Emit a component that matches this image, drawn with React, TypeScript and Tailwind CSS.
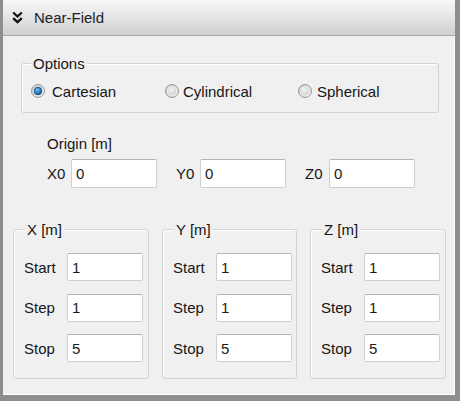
import React from "react";

function Radio({ checked }: { checked?: boolean }) {
  return (
    <svg width={14} height={14} viewBox="0 0 14 14" className="shrink-0">
      <defs>
        <linearGradient id="rg-ring" x1="0" y1="0" x2="1" y2="1">
          <stop offset="0" stopColor="#d4d4d4" />
          <stop offset="1" stopColor="#fbfbfb" />
        </linearGradient>
        <radialGradient id="rg-dot" cx="0.4" cy="0.35" r="0.7">
          <stop offset="0" stopColor="#7cc4f2" />
          <stop offset="0.5" stopColor="#2a86cc" />
          <stop offset="1" stopColor="#0d4f86" />
        </radialGradient>
        <radialGradient id="rg-off" cx="0.4" cy="0.35" r="0.7">
          <stop offset="0" stopColor="#f4f4f4" />
          <stop offset="1" stopColor="#cfcfcf" />
        </radialGradient>
      </defs>
      <circle cx={7} cy={7} r={6.4} fill="url(#rg-ring)" stroke="#8d8d8d" strokeWidth={1} />
      {checked ? (
        <circle cx={7} cy={7} r={3.9} fill="url(#rg-dot)" stroke="#1a4a78" strokeWidth={0.6} />
      ) : (
        <circle cx={7} cy={7} r={4.4} fill="url(#rg-off)" />
      )}
    </svg>
  );
}

function Field({ value, w, h }: { value: string; w: string; h: string }) {
  return (
    <input
      readOnly
      defaultValue={value}
      className={`${w} ${h} rounded-[2px] border border-[#cfcfcf] border-t-[#b4b4b4] bg-white pl-[4px] text-[15px] text-[#1a1a1a] outline-none`}
    />
  );
}

function AxisBox({ title, w }: { title: string; w: string }) {
  const rows = [
    ["Start", "1"],
    ["Step", "1"],
    ["Stop", "5"],
  ];
  return (
    <div
      className={`relative ${w} h-[150px] rounded-[3px] border border-[#d3d3d3] shadow-[inset_1px_1px_0_#fff] pl-[10px] pt-[23px]`}
    >
      <span className="absolute left-[11px] top-[-9px] bg-[#f0f0f0] px-[2px] leading-[17px]">
        {title}
      </span>
      <div className="flex flex-col gap-[12.5px]">
        {rows.map(([label, v]) => (
          <div key={label} className="flex items-center">
            <span className="w-[43px]">{label}</span>
            <Field value={v} w="w-[76px]" h="h-[28px]" />
          </div>
        ))}
      </div>
    </div>
  );
}

export default function App() {
  return (
    <div className="flex h-[401px] w-[460px] flex-col border-b-[6px] border-l-[3px] border-r-[5px] border-[#8e8e8e] bg-[#f0f0f0] font-['Liberation_Sans',Arial,sans-serif] text-[15px] leading-[17px] text-[#161616]">
      {/* header */}
      <div className="flex h-[36px] shrink-0 items-center border-b border-[#a9a9a9] bg-gradient-to-b from-[#f8f8f8] to-[#d0d0d0] pl-[9px]">
        <svg width={11} height={13} viewBox="0 0 11 13">
          <polyline points="1.2,1.5 5.5,5.5 9.8,1.5" fill="none" stroke="#111" strokeWidth={2.3} />
          <polyline points="1.2,7.2 5.5,11.2 9.8,7.2" fill="none" stroke="#111" strokeWidth={2.3} />
        </svg>
        <span className="ml-[11px] text-[#1c1c2c]">Near-Field</span>
      </div>

      {/* body */}
      <div className="flex flex-1 flex-col border-b border-r border-white">
        {/* options */}
        <div className="relative ml-[18px] mt-[27px] h-[50px] w-[418px] rounded-[3px] border border-[#d3d3d3] shadow-[inset_1px_1px_0_#fff]">
          <span className="absolute left-[9px] top-[-9px] bg-[#f0f0f0] px-[2px] leading-[17px]">
            Options
          </span>
          <div className="flex h-full items-center pl-[9px] pt-[6px]">
            <label className="flex w-[134px] items-center gap-[7px]">
              <Radio checked />
              <span>Cartesian</span>
            </label>
            <label className="flex w-[133px] items-center gap-[4px]">
              <Radio />
              <span>Cylindrical</span>
            </label>
            <label className="flex items-center gap-[5px]">
              <Radio />
              <span>Spherical</span>
            </label>
          </div>
        </div>

        {/* origin */}
        <div className="ml-[44px] mt-[22px]">Origin [m]</div>
        <div className="mt-[7px] flex items-center pl-[44px]">
          <span className="w-[24px]">X0</span>
          <Field value="0" w="w-[86px]" h="h-[29px]" />
          <span className="ml-[19px] w-[24px]">Y0</span>
          <Field value="0" w="w-[86px]" h="h-[29px]" />
          <span className="ml-[19px] w-[24px]">Z0</span>
          <Field value="0" w="w-[86px]" h="h-[29px]" />
        </div>

        {/* axes */}
        <div className="mt-[41px] flex gap-[13px] pl-[10px]">
          <AxisBox title="X [m]" w="w-[136px]" />
          <AxisBox title="Y [m]" w="w-[135px]" />
          <AxisBox title="Z [m]" w="w-[136px]" />
        </div>
      </div>
    </div>
  );
}
